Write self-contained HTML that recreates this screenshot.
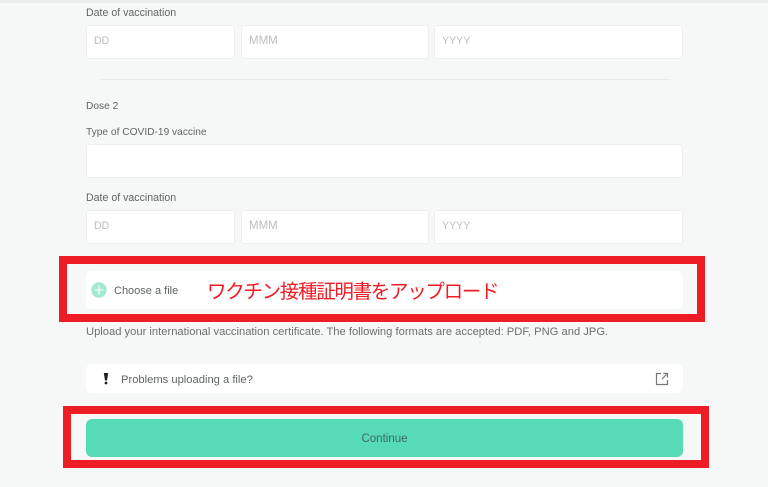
<!DOCTYPE html>
<html>
<head>
<meta charset="utf-8">
<style>
html,body{margin:0;padding:0;}
body{width:768px;height:487px;background:#f5f8f7;position:relative;overflow:hidden;font-family:"Liberation Sans","Noto Sans CJK JP",sans-serif;color:#555b5a;}
.a{position:absolute;}
.t{position:absolute;font-size:10.6px;line-height:12px;white-space:nowrap;color:#5f6564;filter:blur(.3px);}
.i{position:absolute;background:#fff;border:1px solid #ecefec;border-radius:3px;box-sizing:border-box;height:34px;}
.p{position:absolute;font-size:10.6px;line-height:12px;color:#bcc0bf;white-space:nowrap;filter:blur(.3px);}
.r{position:absolute;border:8.5px solid #ee1c25;box-sizing:border-box;}
</style>
</head>
<body>
<div class="a" style="left:0;top:0;width:768px;height:3px;background:#eceeed;"></div>

<div class="t" style="left:86px;top:7px;">Date of vaccination</div>
<div class="i" style="left:86px;top:25px;width:149px;"></div>
<div class="i" style="left:241px;top:25px;width:188px;"></div>
<div class="i" style="left:434px;top:25px;width:249px;"></div>
<div class="p" style="left:94px;top:35px;">DD</div>
<div class="p" style="left:249px;top:35px;font-size:11.5px;">MMM</div>
<div class="p" style="left:442px;top:35px;">YYYY</div>

<div class="a" style="left:100px;top:78.5px;width:570px;height:1px;background:#e9ecea;"></div>

<div class="t" style="left:86px;top:101px;font-size:10.2px;">Dose 2</div>
<div class="t" style="left:86px;top:127px;font-size:10.2px;">Type of COVID-19 vaccine</div>
<div class="i" style="left:86px;top:144px;width:597px;"></div>

<div class="t" style="left:86px;top:192px;">Date of vaccination</div>
<div class="i" style="left:86px;top:210px;width:149px;"></div>
<div class="i" style="left:241px;top:210px;width:188px;"></div>
<div class="i" style="left:434px;top:210px;width:249px;"></div>
<div class="p" style="left:94px;top:220px;">DD</div>
<div class="p" style="left:249px;top:220px;font-size:11.5px;">MMM</div>
<div class="p" style="left:442px;top:220px;">YYYY</div>

<div class="a" style="left:86px;top:271px;width:597px;height:38px;background:#fff;border-radius:6px;"></div>
<svg class="a" style="left:91px;top:282px;" width="16" height="16" viewBox="0 0 16 16">
<circle cx="8" cy="8" r="7.7" fill="#a3e8d3"/>
<path d="M8 3.5V12.5M3.5 8H12.5" stroke="#fff" stroke-width="1.1"/>
</svg>
<div class="t" style="left:114px;top:285px;font-size:11px;">Choose a file</div>
<div class="t" style="left:207px;top:277px;font-size:19.5px;line-height:26px;color:#ee1c25;letter-spacing:-1.3px;font-family:'Noto Sans CJK JP',sans-serif;filter:none;">ワクチン接種証明書をアップロード</div>
<div class="r" style="left:59px;top:256px;width:646px;height:65.5px;"></div>

<div class="t" style="left:86px;top:326px;font-size:11.2px;color:#6a706f;">Upload your international vaccination certificate. The following formats are accepted: PDF, PNG and JPG.</div>

<div class="a" style="left:86px;top:364px;width:597px;height:29px;background:#fff;border-radius:6px;"></div>
<svg class="a" style="left:102px;top:372px;" width="8" height="14" viewBox="0 0 8 14">
<path d="M1.8 1H6.2L5 8.5H3Z" fill="#222"/>
<circle cx="4" cy="11" r="1.4" fill="#222"/>
</svg>
<div class="t" style="left:121px;top:374px;font-size:11.2px;">Problems uploading a file?</div>
<svg class="a" style="left:655px;top:372px;" width="14" height="14" viewBox="0 0 14 14" fill="none" stroke="#777" stroke-width="1.2">
<path d="M6 1.5H1.5V12.5H12.5V8"/>
<path d="M7 7L11.5 2.5M8.5 1.5H12.5V5.5"/>
</svg>

<div class="a" style="left:86px;top:419px;width:597px;height:38px;background:#57dbb7;border-radius:6px;"></div>
<div class="t" style="left:86px;top:433px;width:597px;text-align:center;color:#3d6a60;font-size:11.5px;">Continue</div>
<div class="r" style="left:63px;top:406px;width:646px;height:61.5px;"></div>
</body>
</html>
